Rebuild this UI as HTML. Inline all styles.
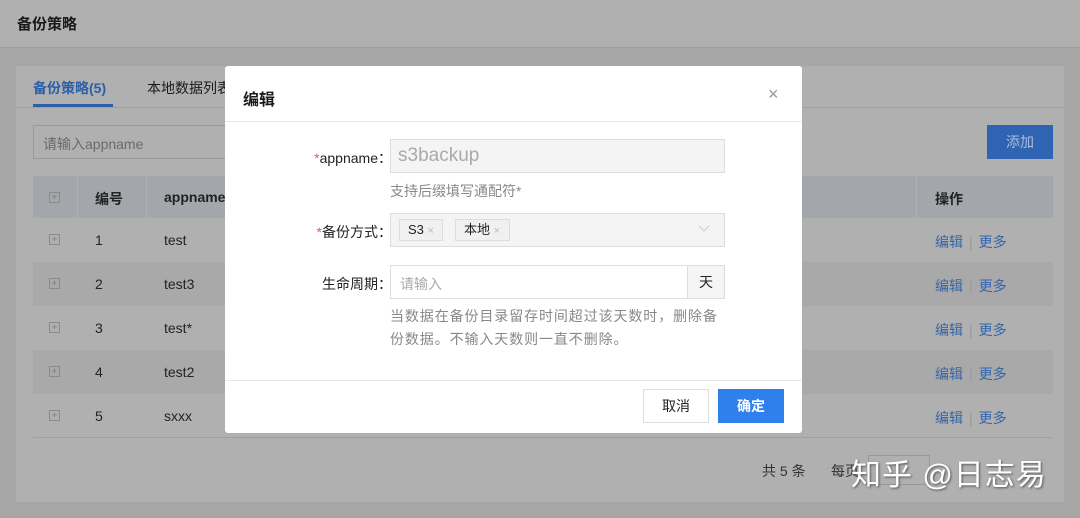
<!DOCTYPE html>
<html><head><meta charset="utf-8"><style>
*{margin:0;padding:0;box-sizing:border-box}
body{width:1080px;height:518px;overflow:hidden;background:#a7a7a7;font-family:"Liberation Sans","Noto Sans CJK SC",sans-serif;position:relative;color:#222}
.a{position:absolute}
.t{font-size:14px}
.link{color:#3565ad;font-size:14px}
.link i{font-style:normal;color:#999;margin:0 6px}
.pl{width:11px;height:11px;border:1px solid #8a8a8a;font-size:9px;line-height:9px;text-align:center;color:#777}
</style></head><body>
<div class="a" style="left:0;top:0;width:1080px;height:48px;background:#b0b0b0;border-bottom:1px solid #9c9c9c"></div>
<div class="a" style="left:17px;top:13px;font-size:15px;font-weight:bold;color:#1a1a1a">备份策略</div>
<div class="a" style="left:16px;top:66px;width:1048px;height:436px;background:#b0b0b0"></div>
<div class="a" style="left:16px;top:107px;width:1048px;height:1px;background:#a0a0a0"></div>
<div class="a" style="left:33px;top:78px;font-size:14px;color:#2d5ea8;font-weight:bold">备份策略(5)</div>
<div class="a" style="left:33px;top:104px;width:80px;height:3px;background:#2d5ea8"></div>
<div class="a" style="left:147px;top:78px;font-size:14px;color:#1a1a1a">本地数据列表</div>
<div class="a" style="left:33px;top:125px;width:200px;height:34px;border:1px solid #999;background:#b0b0b0"></div>
<div class="a" style="left:43px;top:134px;font-size:14px;color:#6a6a6a">请输入appname</div>
<div class="a" style="left:987px;top:125px;width:66px;height:34px;background:#2f64b3;color:#a8bfdf;font-size:14px;text-align:center;line-height:34px">添加</div>
<div class="a" style="left:33px;top:176px;width:1020px;height:42px;background:#a3a7ab"></div>
<div class="a" style="left:77px;top:176px;width:1px;height:42px;background:#b0b0b0"></div>
<div class="a" style="left:146px;top:176px;width:1px;height:42px;background:#b0b0b0"></div>
<div class="a" style="left:916px;top:176px;width:1px;height:42px;background:#b0b0b0"></div>
<div class="a t" style="left:95px;top:189px;font-weight:bold">编号</div>
<div class="a t" style="left:164px;top:189px;font-weight:bold">appname</div>
<div class="a t" style="left:935px;top:189px;font-weight:bold">操作</div>
<div class="a pl" style="left:49px;top:192px">+</div>

<div class="a" style="left:33px;top:262px;width:1020px;height:44px;background:#a9a9a9"></div>
<div class="a" style="left:33px;top:350px;width:1020px;height:44px;background:#a9a9a9"></div>
<div class="a" style="left:33px;top:437px;width:1020px;height:1px;background:#a0a0a0"></div>

<div class="a pl" style="left:49px;top:234px">+</div>
<div class="a pl" style="left:49px;top:278px">+</div>
<div class="a pl" style="left:49px;top:322px">+</div>
<div class="a pl" style="left:49px;top:366px">+</div>
<div class="a pl" style="left:49px;top:410px">+</div>
<div class="a t" style="left:95px;top:232px">1</div><div class="a t" style="left:164px;top:232px">test</div>
<div class="a t" style="left:95px;top:276px">2</div><div class="a t" style="left:164px;top:276px">test3</div>
<div class="a t" style="left:95px;top:320px">3</div><div class="a t" style="left:164px;top:320px">test*</div>
<div class="a t" style="left:95px;top:364px">4</div><div class="a t" style="left:164px;top:364px">test2</div>
<div class="a t" style="left:95px;top:408px">5</div><div class="a t" style="left:164px;top:408px">sxxx</div>
<div class="a link" style="left:935px;top:232px">编辑<i>|</i>更多</div>
<div class="a link" style="left:935px;top:276px">编辑<i>|</i>更多</div>
<div class="a link" style="left:935px;top:320px">编辑<i>|</i>更多</div>
<div class="a link" style="left:935px;top:364px">编辑<i>|</i>更多</div>
<div class="a link" style="left:935px;top:408px">编辑<i>|</i>更多</div>
<div class="a t" style="left:762px;top:461px;color:#333">共 5 条</div>
<div class="a t" style="left:831px;top:461px;color:#333">每页</div>
<div class="a" style="left:868px;top:455px;width:62px;height:30px;border:1px solid #999"></div>
<div class="a" style="left:851px;top:450px;font-size:30px;letter-spacing:1px;color:#fff;text-shadow:1px 1px 2px #555">知乎 @日志易</div>

<div class="a" style="left:225px;top:66px;width:577px;height:367px;background:#fff;border-radius:3px"></div>
<div class="a" style="left:243px;top:86px;font-size:16px;font-weight:bold;color:#1a1a1a">编辑</div>
<div class="a" style="left:768px;top:84px;font-size:18px;color:#999">×</div>
<div class="a" style="left:225px;top:121px;width:577px;height:1px;background:#e8e8e8"></div>
<div class="a t" style="left:288px;top:148px;width:104px;text-align:right"><span style="color:#e5557a">*</span>appname：</div>
<div class="a" style="left:390px;top:139px;width:335px;height:34px;background:#f4f4f4;border:1px solid #ddd"></div>
<div class="a" style="left:398px;top:145px;font-size:19px;color:#aaa">s3backup</div>
<div class="a" style="left:390px;top:181px;font-size:14px;color:#888">支持后缀填写通配符*</div>
<div class="a t" style="left:288px;top:222px;width:104px;text-align:right"><span style="color:#e5557a">*</span>备份方式：</div>
<div class="a" style="left:390px;top:213px;width:335px;height:34px;background:#f4f4f4;border:1px solid #ddd"></div>
<div class="a" style="left:399px;top:219px;width:44px;height:22px;border:1px solid #ddd;background:#f0f0f0;font-size:13px;line-height:20px;padding-left:8px">S3 <span style="color:#bbb;font-size:11px">×</span></div>
<div class="a" style="left:455px;top:219px;width:55px;height:22px;border:1px solid #ddd;background:#f0f0f0;font-size:13px;line-height:20px;padding-left:8px">本地 <span style="color:#bbb;font-size:11px">×</span></div>
<div class="a" style="left:700px;top:222px;width:8px;height:8px;border-right:1px solid #ccc;border-bottom:1px solid #ccc;transform:rotate(45deg)"></div>
<div class="a t" style="left:288px;top:274px;width:104px;text-align:right">生命周期：</div>
<div class="a" style="left:390px;top:265px;width:335px;height:34px;border:1px solid #ddd"></div>
<div class="a" style="left:687px;top:265px;width:38px;height:34px;background:#f5f5f5;border:1px solid #ddd;text-align:center;line-height:32px;font-size:14px">天</div>
<div class="a t" style="left:400px;top:274px;color:#aaa">请输入</div>
<div class="a" style="left:390px;top:305px;width:345px;font-size:14px;letter-spacing:0.9px;line-height:23px;color:#888;white-space:nowrap">当数据在备份目录留存时间超过该天数时，删除备<br>份数据。不输入天数则一直不删除。</div>
<div class="a" style="left:225px;top:380px;width:577px;height:1px;background:#e8e8e8"></div>
<div class="a" style="left:643px;top:389px;width:66px;height:34px;border:1px solid #ddd;text-align:center;line-height:32px;font-size:14px">取消</div>
<div class="a" style="left:718px;top:389px;width:66px;height:34px;background:#2f80ed;color:#fff;text-align:center;line-height:34px;font-size:14px;font-weight:bold">确定</div>
</body></html>
